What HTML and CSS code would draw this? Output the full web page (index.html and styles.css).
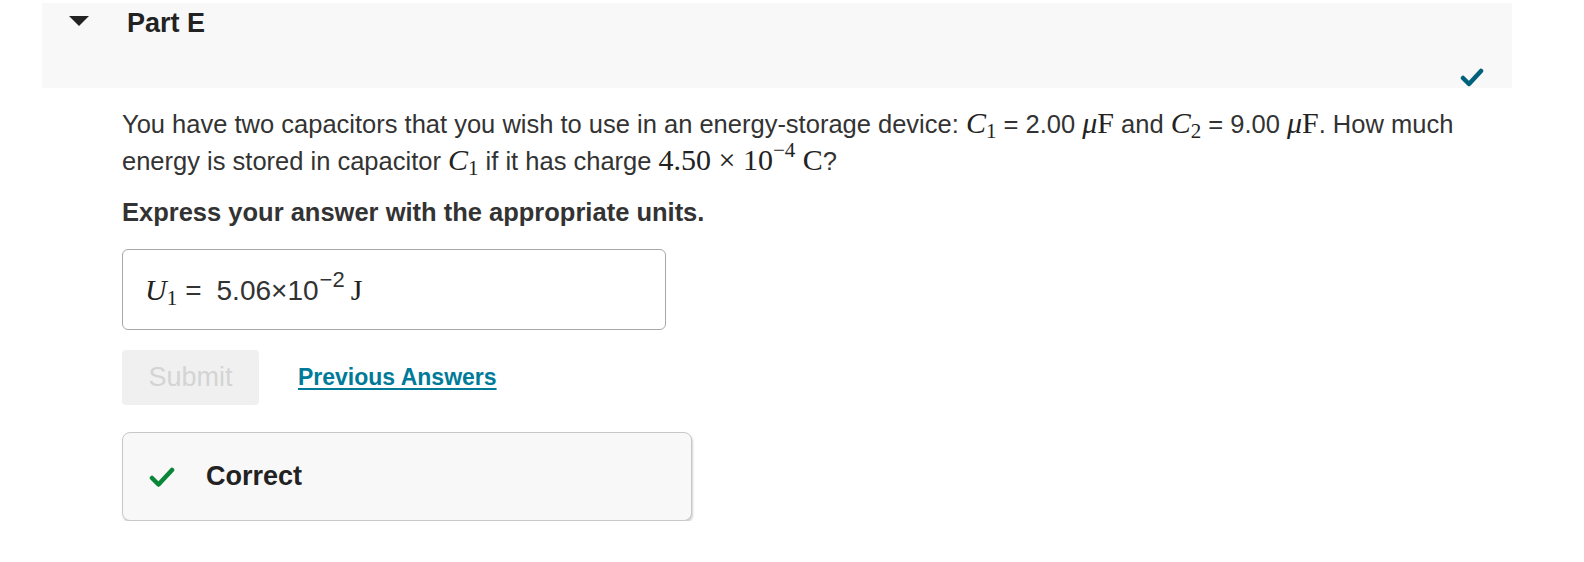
FILE: index.html
```html
<!DOCTYPE html>
<html lang="en">
  <head>
    <meta charset="UTF-8" />
    <title>Part E</title>
    <link rel="stylesheet" href="styles.css">
  </head>
  <body>
    <div class="part">
      <div class="part-header">
        <span class="toggle"></span>
        <h2 class="part-title">Part E</h2>
        <svg class="part-check" viewBox="0 0 24 20" width="24" height="20">
          <path d="M3 11 L9 17 L21 4" fill="none" stroke="#00617a" stroke-width="4.5" stroke-linecap="round" stroke-linejoin="round"/>
        </svg>
      </div>

      <div class="part-body">
        <p class="question">
          You have two capacitors that you wish to use in an energy-storage device:
          <span class="m"><i>C</i><sub>1</sub></span> = 2.00 <span class="m"><i>μ</i>F</span>
          and <span class="m"><i>C</i><sub>2</sub></span> = 9.00 <span class="m"><i>μ</i>F</span>. How much
          energy is stored in capacitor <span class="m"><i>C</i><sub>1</sub></span> if it has charge
          <span class="m">4.50 × 10<sup>−4</sup> C</span>?
        </p>

        <p class="instruction">Express your answer with the appropriate units.</p>

        <div class="answer-box">
          <span class="m"><i>U</i><sub>1</sub></span>
          <span class="eq">=</span>
          <span class="value">5.06×10<sup>−2</sup></span>
          <span class="m unit">J</span>
        </div>

        <div class="actions">
          <button class="btn-submit" disabled>Submit</button>
          <a href="#" class="prev-link">Previous Answers</a>
        </div>

        <div class="feedback">
          <svg class="feedback-check" viewBox="0 0 26 22" width="26" height="22">
            <path d="M3 12 L9.5 18.5 L23 4" fill="none" stroke="#0a8638" stroke-width="4.5" stroke-linecap="round" stroke-linejoin="round"/>
          </svg>
          <span class="feedback-text">Correct</span>
        </div>
      </div>
    </div>
  </body>
</html>
```

FILE: styles.css
```css
* {
  margin: 0;
  padding: 0;
  box-sizing: border-box;
}

body {
  font-family: "Liberation Sans", Arial, sans-serif;
  color: #333;
  background: white;
}

.part {
  padding-top: 3px;
}

.part-header {
  display: grid;
  grid-template-columns: 85px 1fr auto;
  height: 85px;
  margin: 0 72px 0 42px;
  background: #f8f8f8;
}

.toggle {
  width: 0;
  height: 0;
  margin: 13px 0 0 27px;
  border-left: 10px solid transparent;
  border-right: 10px solid transparent;
  border-top: 10px solid #222;
}

.part-title {
  font-size: 27px;
  font-weight: bold;
  color: #222;
  padding-top: 5px;
}

.part-check {
  align-self: end;
  margin: 0 28px 1px 0;
}

.part-body {
  padding: 17px 72px 0 122px;
}

.question {
  font-size: 25.5px;
  line-height: 36px;
}

.m {
  font-family: "Liberation Serif", "DejaVu Serif", serif;
  font-size: 30px;
  color: #222;
}

.m i {
  font-style: italic;
}

.m sub {
  font-size: 21px;
  vertical-align: -5px;
  line-height: 0;
}

.m sup,
.value sup {
  font-size: 21px;
  vertical-align: 13px;
  line-height: 0;
}

.instruction {
  font-size: 25.5px;
  font-weight: bold;
  margin-top: 19px;
}

.answer-box {
  display: flex;
  align-items: baseline;
  width: 544px;
  height: 81px;
  margin-top: 22px;
  padding: 23px 0 0 22px;
  border: 1.5px solid #a8a8a8;
  border-radius: 6px;
  font-size: 28px;
}

.answer-box .eq {
  margin: 0 15px 0 8px;
}

.answer-box .value sup {
  font-size: 22px;
  margin-left: 1px;
}

.answer-box .unit {
  margin-left: 6px;
}

.actions {
  display: flex;
  align-items: center;
  gap: 39px;
  margin-top: 20px;
}

.btn-submit {
  width: 137px;
  height: 55px;
  background: #f0f0f0;
  border: none;
  border-radius: 4px;
  font-family: "Liberation Sans", Arial, sans-serif;
  font-size: 27px;
  color: #d4d4d4;
}

.prev-link {
  font-size: 23px;
  font-weight: bold;
  color: #007a99;
  text-decoration: underline;
  text-underline-offset: 3px;
  text-decoration-thickness: 2px;
}

.feedback {
  display: flex;
  align-items: center;
  width: 570px;
  height: 89px;
  margin-top: 27px;
  padding-left: 26px;
  background: #f8f8f8;
  border: 1.5px solid #c8c8c8;
  border-radius: 8px;
  box-shadow: 1px 2px 2px rgba(0, 0, 0, 0.18);
}

.feedback-check {
  margin-right: 31px;
}

.feedback-text {
  font-size: 27px;
  font-weight: bold;
  color: #222;
}
```
